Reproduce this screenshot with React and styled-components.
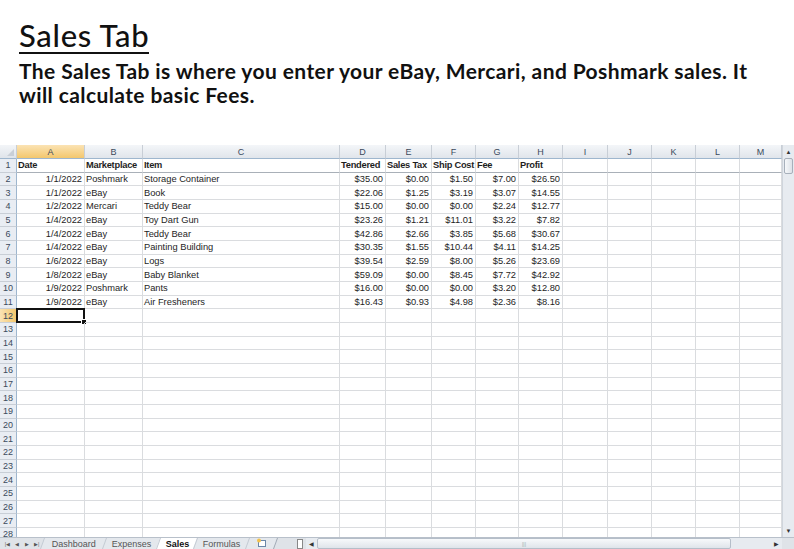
import styled, { createGlobalStyle } from "styled-components"

const Global = createGlobalStyle`
  html, body { margin: 0; padding: 0; background: #fff; }
  body { font-family: "Liberation Sans", Arial, sans-serif; }
`

const Page = styled.div`
  width: 794px;
  height: 549px;
  display: flex;
  flex-direction: column;
  overflow: hidden;
`

const Intro = styled.header`
  height: 145px;
  box-sizing: border-box;
  padding: 20px 0 0 19px;
  font-family: "Lato", "DejaVu Sans", sans-serif;
  color: #111;
`

const Title = styled.h1`
  margin: 0;
  display: inline-block;
  font-size: 31px;
  font-weight: 500;
  line-height: 31px;
  letter-spacing: 0.7px;
  border-bottom: 2px solid #111;
  padding-bottom: 1px;
`

const Lead = styled.p`
  margin: 5px 0 0;
  font-size: 21px;
  font-weight: 700;
  line-height: 24px;
  letter-spacing: 0.4px;
`

const Sheet = styled.div`
  display: flex;
  height: 392px;
  overflow: hidden;
`

const Grid = styled.div`
  display: grid;
  grid-template-columns: 17px 68px 58px 197px 46px 46px 44px 43px 44px 45px 44px 44px 44px 42px;
  grid-template-rows: 14px;
  grid-auto-rows: 13.68px;
  font-size: 9.3px;
  color: #1e1e1e;
  align-content: start;
`

const Corner = styled.div`
  background: linear-gradient(#f3f5f8, #dfe4ea);
  border-right: 1px solid #c8ced6;
  border-bottom: 1px solid #9eb6ce;
  position: relative;
  &::after {
    content: "";
    position: absolute;
    right: 2px;
    bottom: 2px;
    border-left: 7px solid transparent;
    border-bottom: 7px solid #c9cfd7;
  }
`

const ColHead = styled.div`
  background: ${p => (p.$active ? "linear-gradient(#fbe3b4, #f3c76d)" : "linear-gradient(#f4f6f9, #e0e5eb)")};
  border-right: 1px solid #c8ced6;
  border-bottom: 1px solid #9eb6ce;
  color: #3b4a5c;
  display: flex;
  align-items: center;
  justify-content: center;
  font-size: 9px;
`

const RowHead = styled.div`
  background: ${p => (p.$active ? "linear-gradient(90deg, #fbe3b4, #f3c76d)" : "#e9edf3")};
  border-right: 1px solid #9eb6ce;
  border-bottom: 1px solid #c8ced6;
  color: #3b4a5c;
  font-size: 9px;
  display: flex;
  align-items: center;
  justify-content: center;
  box-sizing: border-box;
`

const Cell = styled.div`
  border-right: 1px solid #dadcdf;
  border-bottom: 1px solid ${p => (p.$frozen ? "#a9b0b8" : "#dadcdf")};
  display: flex;
  align-items: center;
  justify-content: ${p => (p.$right ? "flex-end" : "flex-start")};
  padding: 0 2px 0 1px;
  font-weight: ${p => (p.$bold ? 700 : 400)};
  letter-spacing: ${p => (p.$bold ? "-0.25px" : "0")};
  white-space: nowrap;
  overflow: visible;
  position: relative;
  box-sizing: border-box;
  ${p => p.$selected && `
    border: 2px solid #111;
    margin: -1px 0 0 -1px;
    &::after {
      content: "";
      position: absolute;
      right: -4px;
      bottom: -4px;
      width: 4px;
      height: 4px;
      background: #111;
      border: 1px solid #fff;
    }
  `}
`

const VScroll = styled.div`
  width: 12px;
  background: #e7ebf0;
  border-left: 1px solid #cfd5dc;
  display: flex;
  flex-direction: column;
  align-items: center;
  box-sizing: border-box;
`

const ScrollArrow = styled.div`
  width: 11px;
  height: 13px;
  display: flex;
  align-items: center;
  justify-content: center;
  font-size: 6px;
  color: #333;
  margin-top: ${p => (p.$end ? "auto" : "0")};
`

const Thumb = styled.div`
  width: 9px;
  height: 16px;
  box-sizing: border-box;
  border: 1px solid #a7b0bb;
  border-radius: 2px;
  background: linear-gradient(90deg, #f6f8fa, #dde2e8);
`

const TabBar = styled.div`
  height: 12px;
  display: flex;
  align-items: stretch;
  background: #dfe3e8;
  border-top: 1px solid #b8c0ca;
  box-sizing: border-box;
  font-size: 9px;
  color: #555;
`

const Nav = styled.div`
  width: 44px;
  display: flex;
  align-items: center;
  justify-content: space-around;
  font-size: 5px;
  color: #555;
  padding: 0 2px;
  box-sizing: border-box;
`

const Tab = styled.div`
  display: flex;
  align-items: center;
  padding: 0 ${p => p.$pad || 7}px;
  margin-left: -2px;
  background: ${p => (p.$active ? "#fff" : "#e4e8ed")};
  color: ${p => (p.$active ? "#111" : "#555")};
  font-weight: ${p => (p.$active ? 700 : 400)};
  border-right: 1px solid #a0a9b4;
  border-left: 1px solid #c3cad3;
  transform: skewX(-20deg);
  & > span { transform: skewX(20deg); }
`

const Split = styled.div`
  margin-left: auto;
  width: 4px;
  height: 8px;
  align-self: center;
  border: 1px solid #888;
  background: #fff;
`

const HScroll = styled.div`
  width: 476px;
  display: flex;
  align-items: center;
  background: #e7ebf0;
  margin-left: 3px;
`

const HTrack = styled.div`
  flex: 1;
  height: 9px;
  border: 1px solid #b5bec9;
  border-radius: 2px;
  background: linear-gradient(#f7f9fb, #dfe4ea);
  margin-right: 40px;
  display: flex;
  align-items: center;
  justify-content: center;
  font-size: 5px;
  color: #9aa;
`

const Filler = styled.div`
  width: 12px;
  background: #dfe3e8;
`

const cols = ["A", "B", "C", "D", "E", "F", "G", "H", "I", "J", "K", "L", "M"]

const sales = [
  ["1/1/2022", "Poshmark", "Storage Container", "$35.00", "$0.00", "$1.50", "$7.00", "$26.50"],
  ["1/1/2022", "eBay", "Book", "$22.06", "$1.25", "$3.19", "$3.07", "$14.55"],
  ["1/2/2022", "Mercari", "Teddy Bear", "$15.00", "$0.00", "$0.00", "$2.24", "$12.77"],
  ["1/4/2022", "eBay", "Toy Dart Gun", "$23.26", "$1.21", "$11.01", "$3.22", "$7.82"],
  ["1/4/2022", "eBay", "Teddy Bear", "$42.86", "$2.66", "$3.85", "$5.68", "$30.67"],
  ["1/4/2022", "eBay", "Painting Building", "$30.35", "$1.55", "$10.44", "$4.11", "$14.25"],
  ["1/6/2022", "eBay", "Logs", "$39.54", "$2.59", "$8.00", "$5.26", "$23.69"],
  ["1/8/2022", "eBay", "Baby Blanket", "$59.09", "$0.00", "$8.45", "$7.72", "$42.92"],
  ["1/9/2022", "Poshmark", "Pants", "$16.00", "$0.00", "$0.00", "$3.20", "$12.80"],
  ["1/9/2022", "eBay", "Air Fresheners", "$16.43", "$0.93", "$4.98", "$2.36", "$8.16"],
]

const headers = ["Date", "Marketplace", "Item", "Tendered", "Sales Tax", "Ship Cost", "Fee", "Profit"]

function buildRows() {
  const rows = []
  for (let r = 1; r <= 28; r++) {
    let values = []
    if (r === 1) values = headers
    else if (r <= 11) values = sales[r - 2]
    const active = r === 12
    rows.push(<RowHead key={"h" + r} $active={active}>{r}</RowHead>)
    cols.forEach((c, i) => {
      const v = values[i] || ""
      const right = r > 1 && (i === 0 || (i >= 3 && i <= 7))
      rows.push(
        <Cell
          key={c + r}
          $bold={r === 1}
          $right={right}
          $frozen={r === 1}
          $selected={active && i === 0}
        >
          {v}
        </Cell>
      )
    })
  }
  return rows
}

export default function App() {
  return (
    <Page>
      <Global />
      <Intro>
        <Title>Sales Tab</Title>
        <Lead>
          The Sales Tab is where you enter your eBay, Mercari, and Poshmark sales. It
          <br />
          will calculate basic Fees.
        </Lead>
      </Intro>
      <Sheet>
        <Grid>
          <Corner />
          {cols.map(c => (
            <ColHead key={c} $active={c === "A"}>{c}</ColHead>
          ))}
          {buildRows()}
        </Grid>
        <VScroll>
          <ScrollArrow>▲</ScrollArrow>
          <Thumb />
          <ScrollArrow $end>▼</ScrollArrow>
        </VScroll>
      </Sheet>
      <TabBar>
        <Nav>
          <span>|◀</span>
          <span>◀</span>
          <span>▶</span>
          <span>▶|</span>
        </Nav>
        <Tab $pad={9}><span>Dashboard</span></Tab>
        <Tab><span>Expenses</span></Tab>
        <Tab $active><span>Sales</span></Tab>
        <Tab><span>Formulas</span></Tab>
        <Tab $pad={8}>
          <span>
            <svg width="11" height="9" viewBox="0 0 11 9">
              <rect x="2.5" y="2.5" width="7" height="6" fill="#fff" stroke="#6b87a8" />
              <circle cx="3" cy="2.5" r="2" fill="#f2c14b" />
            </svg>
          </span>
        </Tab>
        <Split />
        <HScroll>
          <ScrollArrow>◀</ScrollArrow>
          <HTrack>|||</HTrack>
          <ScrollArrow>▶</ScrollArrow>
        </HScroll>
        <Filler />
      </TabBar>
    </Page>
  )
}
